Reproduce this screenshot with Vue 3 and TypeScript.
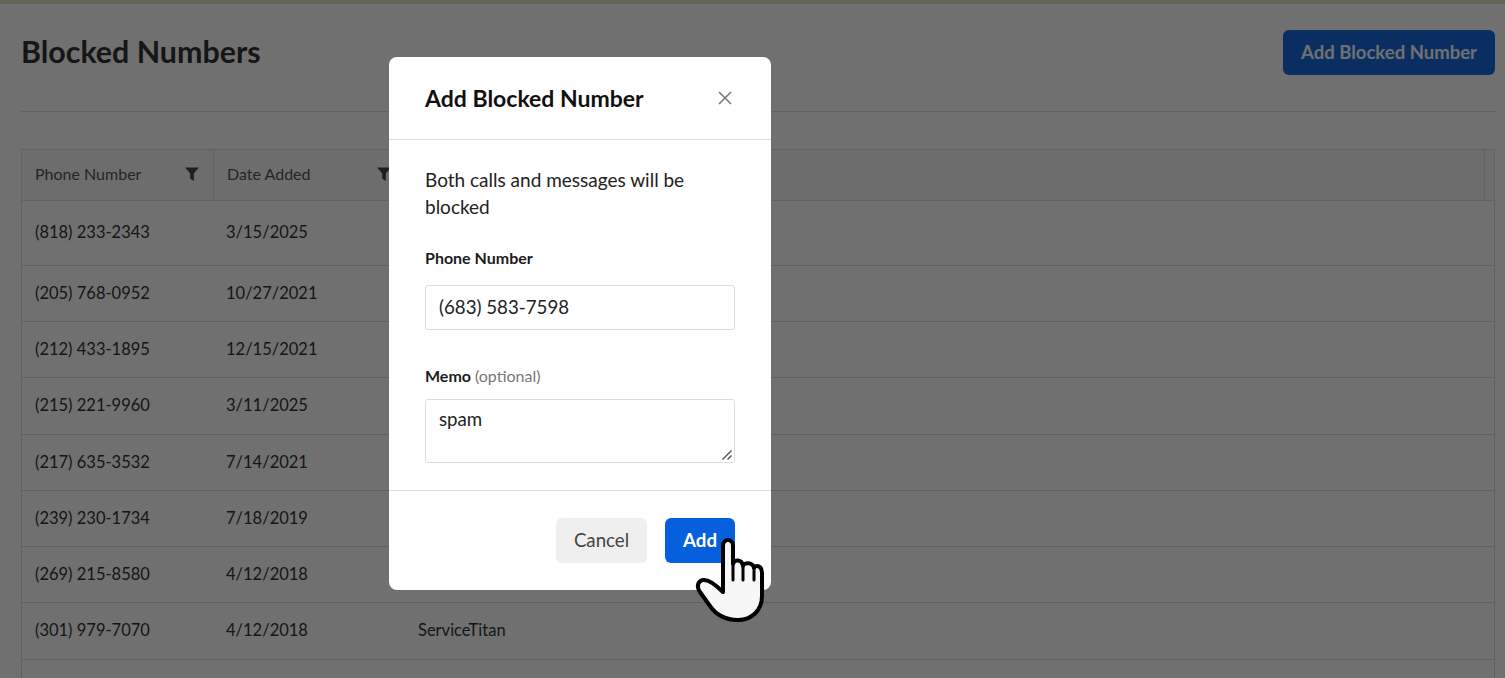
<script setup lang="ts">
const rows = [
  { phone: '(818) 233-2343', date: '3/15/2025', memo: '', h: 65 },
  { phone: '(205) 768-0952', date: '10/27/2021', memo: '', h: 56 },
  { phone: '(212) 433-1895', date: '12/15/2021', memo: '', h: 56 },
  { phone: '(215) 221-9960', date: '3/11/2025', memo: '', h: 57 },
  { phone: '(217) 635-3532', date: '7/14/2021', memo: '', h: 56 },
  { phone: '(239) 230-1734', date: '7/18/2019', memo: '', h: 56 },
  { phone: '(269) 215-8580', date: '4/12/2018', memo: '', h: 56 },
  { phone: '(301) 979-7070', date: '4/12/2018', memo: 'ServiceTitan', h: 57 },
  { phone: '', date: '', memo: '', h: 56 },
]
</script>

<template>
  <div class="page">
    <div class="strip"></div>
    <header class="top">
      <h1>Blocked Numbers</h1>
      <button class="primary-dim">Add Blocked Number</button>
    </header>
    <div class="table">
      <div class="thead">
        <div class="th c1">
          <span>Phone Number</span>
          <svg class="funnel" viewBox="0 0 14 14"><path d="M0 .5h14L8.8 6.6V14L5.2 11.6V6.6z" /></svg>
        </div>
        <div class="th c2">
          <span>Date Added</span>
          <svg class="funnel" viewBox="0 0 14 14"><path d="M0 .5h14L8.8 6.6V14L5.2 11.6V6.6z" /></svg>
        </div>
        <div class="th c3"></div>
        <div class="th c4"></div>
      </div>
      <div v-for="(r, i) in rows" :key="i" class="tr" :style="{ height: r.h + 'px' }">
        <div class="td c1">{{ r.phone }}</div>
        <div class="td c2">{{ r.date }}</div>
        <div class="td c3">{{ r.memo }}</div>
      </div>
    </div>

    <div class="overlay">
      <div class="modal">
        <div class="m-head">
          <h2>Add Blocked Number</h2>
          <svg class="close" viewBox="0 0 14 14"><path d="M1 1l12 12M13 1L1 13" /></svg>
        </div>
        <div class="m-body">
          <p class="hint">Both calls and messages will be blocked</p>
          <label class="lab phone-lab">Phone Number</label>
          <div class="input">(683) 583-7598</div>
          <label class="lab memo-lab">Memo <span>(optional)</span></label>
          <div class="area">
            spam
            <svg class="grip" viewBox="0 0 12 12"><path d="M1.5 10.5L10.5 1.5M6.5 10.5L10.5 6.5" /></svg>
          </div>
        </div>
        <div class="m-foot">
          <button class="cancel">Cancel</button>
          <button class="add">Add</button>
        </div>
      </div>
      <svg class="hand" viewBox="690 530 85 100">
        <path d="M723 592L723 546C723 538 733 538 733 546L733 564C734 559 742 559 743 566C744 562 753 562 754 568C756 564 762 566 762 573L762 596C762 610 752 620 738 620C726 620 717 616 710 606L700 592C696 586 698 581 703 580C709 579 717 586 723 592Z" />
        <path class="fold" d="M733 564V580M743 566V580M754 568V580" />
      </svg>
    </div>
  </div>
</template>

<style>
html, body { margin: 0; height: 100%; overflow: hidden; background: #fff; }
</style>

<style scoped>
.page {
  position: relative;
  height: 678px;
  overflow: hidden;
  padding: 0 10px 0 21px;
  box-sizing: border-box;
  font-family: "Lato", "Noto Sans", sans-serif;
  color: #2b2b2b;
  background: #fff;
}
.strip { height: 4px; margin: 0 -10px 0 -21px; background: #e6e6d2; }
.top {
  display: flex;
  align-items: center;
  justify-content: space-between;
  height: 108px;
  box-sizing: border-box;
  padding-bottom: 18px;
  padding-top: 7px;
  border-bottom: 1px solid #dcdcdc;
}
h1 { margin: 0 0 2px; font-size: 30.4px; font-weight: 700; color: #333; line-height: 36px; }
.primary-dim {
  width: 212px;
  height: 45px;
  border: 0;
  border-radius: 6px;
  background: #1769e0;
  color: #fff;
  padding: 0;
  font: 700 18.5px "Lato", sans-serif;
}
.table { margin-top: 37px; border: 1px solid #dcdcdc; border-bottom: 0; }
.thead { display: flex; height: 50px; border-bottom: 1px solid #dcdcdc; background: #f8f8f8; }
.th {
  display: flex;
  align-items: center;
  justify-content: space-between;
  box-sizing: border-box;
  padding: 0 14px 2px 13px;
  font-size: 16px;
  color: #555;
  border-right: 1px solid #dcdcdc;
}
.th span { margin-bottom: 2px; }
.c1 { width: 192px; flex: none; box-sizing: border-box; }
.c2 { width: 192px; flex: none; box-sizing: border-box; }
.c3 { flex: 1; }
.th.c4 { width: 9px; flex: none; border-right: 0; padding: 0; }
.funnel { width: 14px; height: 14px; fill: #444; }
.tr { display: flex; align-items: center; box-sizing: border-box; border-bottom: 1px solid #dcdcdc; padding-bottom: 2px; }
.td { padding-left: 13px; font-size: 16.5px; color: #333; }
.td.c2 { padding-left: 12px; }
.td.c3 { padding-left: 12px; }

.overlay {
  position: absolute;
  inset: 0;
  background: rgba(0, 0, 0, 0.56);
}
.modal {
  position: absolute;
  left: 389px;
  top: 57px;
  width: 382px;
  height: 533px;
  display: flex;
  flex-direction: column;
  background: #fff;
  border-radius: 8px;
  color: #1c1c1c;
}
.m-head {
  height: 83px;
  flex: none;
  box-sizing: border-box;
  display: flex;
  align-items: center;
  justify-content: space-between;
  padding: 0 39px 0 36px;
  border-bottom: 1px solid #dedede;
}
h2 { margin: 0; font-size: 23px; font-weight: 700; color: #111; }
.close { width: 14px; height: 14px; fill: none; stroke: #777; stroke-width: 1.6; }
.m-body { flex: 1; padding: 26px 36px 0; }
.hint { margin: 0; font-size: 19px; line-height: 27px; color: #222; }
.lab { display: block; font-size: 16px; font-weight: 700; color: #1c1c1c; line-height: 20px; }
.phone-lab { margin-top: 28px; }
.memo-lab { margin-top: 36px; }
.memo-lab span { font-weight: 400; color: #777; }
.input, .area {
  box-sizing: border-box;
  border: 1px solid #dcdcdc;
  border-radius: 3px;
  padding-left: 13px;
  font-size: 18.7px;
  color: #222;
}
.input { height: 45px; margin-top: 17px; line-height: 43px; }
.area { position: relative; height: 64px; margin-top: 13px; padding-top: 7px; line-height: 24px; }
.grip { position: absolute; right: 1px; bottom: 1px; width: 12px; height: 12px; fill: none; stroke: #444; stroke-width: 1.2; }
.m-foot {
  height: 100px;
  flex: none;
  box-sizing: border-box;
  display: flex;
  align-items: center;
  justify-content: flex-end;
  gap: 18px;
  padding: 0 36px;
  border-top: 1px solid #dedede;
}
.m-foot button { height: 45px; border: 0; border-radius: 6px; padding: 0 0 2px; font: 400 18.7px "Lato", sans-serif; }
.cancel { width: 91px; background: #efefef; color: #444; }
.m-foot .add { width: 70px; background: #0660dd; color: #fff; font-weight: 700; }
.hand {
  position: absolute;
  left: 690px;
  top: 530px;
  width: 85px;
  height: 100px;
  fill: #f7f7f7;
  stroke: #000;
  stroke-width: 4;
  stroke-linejoin: round;
}
.hand .fold { fill: none; stroke-width: 3; stroke-linecap: round; }
</style>
